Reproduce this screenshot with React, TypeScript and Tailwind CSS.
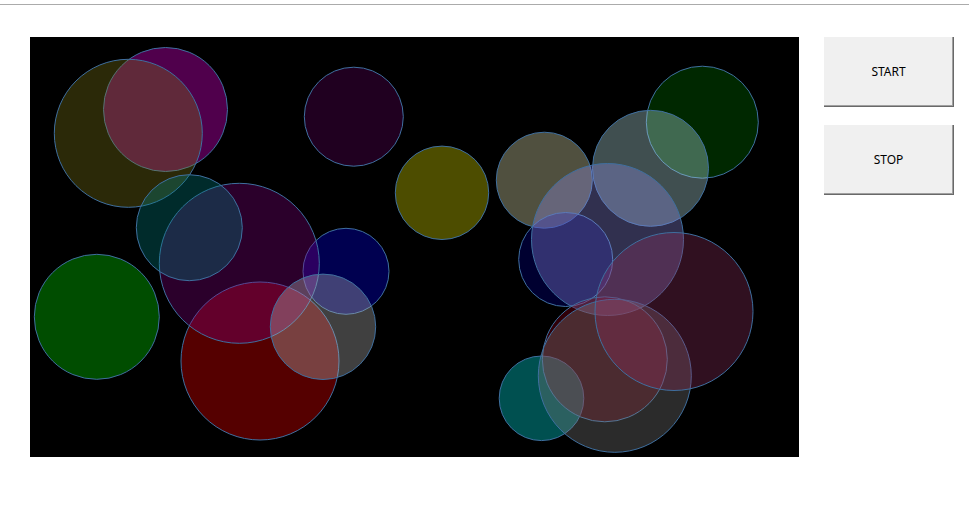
import React from "react";

type Circle = { cx: number; cy: number; r: number; fill: string };

// canvas origin is at page (30, 37); listed in draw order
const circles: Circle[] = [
  { cx: 165.5, cy: 109.5, r: 62, fill: "rgb(240,0,228)" },
  { cx: 128.3, cy: 133.3, r: 74, fill: "rgb(128,122,24)" },
  { cx: 353.8, cy: 116.7, r: 49.5, fill: "rgb(96,0,96)" },
  { cx: 442, cy: 192.8, r: 46.7, fill: "rgb(231,231,0)" },
  { cx: 96.8, cy: 316.8, r: 62.5, fill: "rgb(0,231,0)" },
  { cx: 260, cy: 361, r: 79, fill: "rgb(255,0,0)" },
  { cx: 346, cy: 271.3, r: 43, fill: "rgb(0,0,240)" },
  { cx: 239.3, cy: 263.3, r: 80, fill: "rgb(128,0,128)" },
  { cx: 189.3, cy: 227.7, r: 53, fill: "rgb(0,128,128)" },
  { cx: 323, cy: 326.8, r: 52.7, fill: "rgb(192,192,192)" },
  { cx: 702.3, cy: 122.2, r: 56, fill: "rgb(0,120,0)" },
  { cx: 650.5, cy: 168.3, r: 58, fill: "rgb(192,237,240)" },
  { cx: 544.3, cy: 180.2, r: 48, fill: "rgb(240,240,190)" },
  { cx: 565.7, cy: 259.5, r: 47, fill: "rgb(0,0,144)" },
  { cx: 607.5, cy: 239.5, r: 76, fill: "rgb(147,144,237)" },
  { cx: 541.5, cy: 398.3, r: 42.3, fill: "rgb(0,240,240)" },
  { cx: 604.8, cy: 359.3, r: 62.5, fill: "rgb(144,0,24)" },
  { cx: 614.8, cy: 375.8, r: 76.5, fill: "rgb(128,128,128)" },
  { cx: 674, cy: 311.5, r: 79, fill: "rgb(144,48,96)" },
];

function Bubbles() {
  return (
    <svg width={769} height={420} viewBox="0 0 769 420" className="block bg-black">
      {circles.map((c, i) => (
        <circle
          key={i}
          cx={c.cx - 30}
          cy={c.cy - 37}
          r={c.r}
          fill={c.fill}
          fillOpacity={0.333}
          stroke="#3f6f9f"
          strokeWidth={1}
        />
      ))}
    </svg>
  );
}

function FormButton({ label }: { label: string }) {
  return (
    <button className="w-[130px] h-[70px] bg-[#f0f0f0] border-r border-b border-[#696969] shadow-[inset_-1px_-1px_0_#a0a0a0] text-[12px] text-black font-['Noto_Sans',sans-serif]">
      {label}
    </button>
  );
}

export default function App() {
  return (
    <div className="w-[969px] h-[508px] bg-white overflow-hidden">
      <div className="mt-[4px] h-px bg-[#ababab]" />
      <div className="flex pl-[30px] pt-[32px]">
        <Bubbles />
        <div className="ml-[25px] flex flex-col gap-[18px]">
          <FormButton label="START" />
          <FormButton label="STOP" />
        </div>
      </div>
    </div>
  );
}
